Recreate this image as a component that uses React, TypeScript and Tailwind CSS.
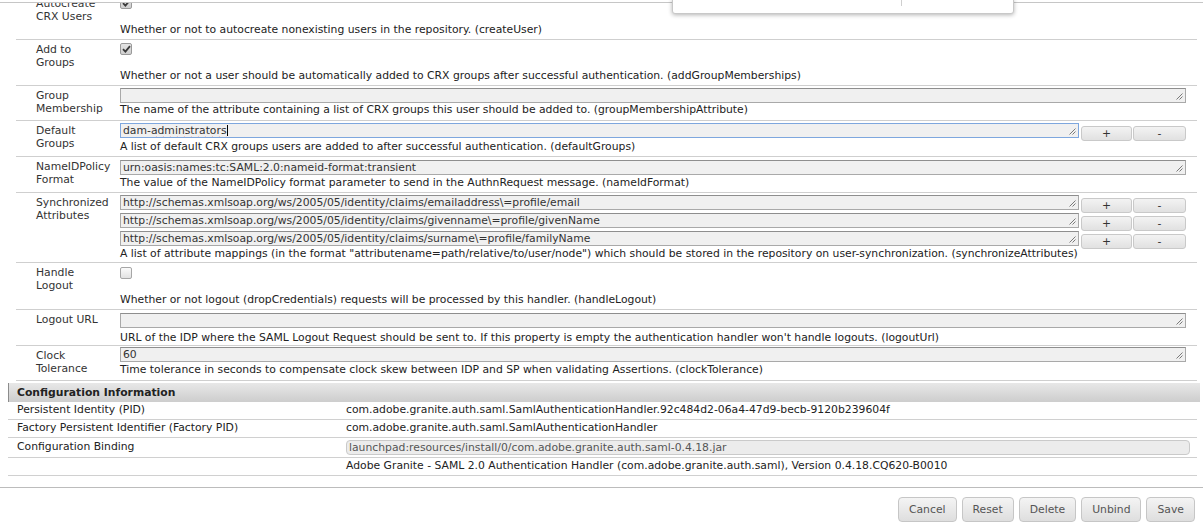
import React from "react";

const FONT = "font-['DejaVu_Sans',Verdana,sans-serif]";

function Grip() {
  return (
    <svg width="7" height="7" className="absolute right-[2px] bottom-[2px]">
      <path d="M6.5 0.5 L0.5 6.5 M6.5 3.5 L3.5 6.5" stroke="#7a7a7a" strokeWidth="1" />
    </svg>
  );
}

function TextBox({ value, focused }: { value?: React.ReactNode; focused?: boolean }) {
  return (
    <div
      className={
        "relative flex-1 h-[15px] border bg-[#f0f0f0] pl-[2px] leading-[13px] text-[#333] whitespace-nowrap overflow-hidden " +
        (focused ? "border-[#7ea7de]" : "border-[#a9a9a9] border-t-[#8e8e8e]")
      }
    >
      {value}
      <Grip />
    </div>
  );
}

function SmallBtn({ label, w }: { label: string; w: string }) {
  return (
    <div
      className={
        "h-[15px] mt-[3px] shrink-0 rounded-[3px] border border-[#c9c9c9] bg-gradient-to-b from-[#f3f3f3] to-[#e1e1e1] text-[#333] text-center leading-[13px] " +
        w
      }
    >
      {label}
    </div>
  );
}

function MultiField({ value, focused, h }: { value: React.ReactNode; focused?: boolean; h: string }) {
  return (
    <div className={"flex items-start " + h}>
      <TextBox value={value} focused={focused} />
      <SmallBtn label="+" w="w-[51px] ml-[2px]" />
      <SmallBtn label="-" w="w-[53px] ml-[1px]" />
    </div>
  );
}

function CheckBox({ checked }: { checked?: boolean }) {
  return (
    <div
      className={
        "w-[12px] h-[12px] rounded-[2px] border flex items-center justify-center " +
        (checked
          ? "border-[#9a9a9a] bg-gradient-to-b from-[#e4e4e4] to-[#cfcfcf]"
          : "border-[#a6a6a6] bg-gradient-to-b from-[#fbfbfb] to-[#e2e2e2]")
      }
    >
      {checked && (
        <svg width="9" height="8" viewBox="0 0 9 8">
          <path d="M1 4.2 L3.4 6.6 L8 1.2" stroke="#3a3a3a" strokeWidth="1.8" fill="none" />
        </svg>
      )}
    </div>
  );
}

function Row({
  label,
  children,
  desc,
  pt = "pt-[2px]",
  pb = "pb-[2px]",
  mt = "",
}: {
  label: React.ReactNode;
  children: React.ReactNode;
  desc: string;
  pt?: string;
  pb?: string;
  mt?: string;
}) {
  return (
    <div className="flex ml-[16px] w-[1181px] border-b border-[#cfcfcf]">
      <div className="w-[104px] shrink-0 pl-[20px] pt-[3px] leading-[13px] text-[#333]">{label}</div>
      <div className={"flex-1 pr-[11px] " + pt + " " + pb}>
        {children}
        <div className={"leading-[14px] text-[#222] whitespace-nowrap " + mt}>{desc}</div>
      </div>
    </div>
  );
}

function ConfigRow({ label, children, h = "h-[17px]" }: { label: string; children: React.ReactNode; h?: string }) {
  return (
    <div className={"flex items-center border-b border-[#d0d0d0] text-[#222] box-content " + h}>
      <div className="w-[338px] shrink-0 pl-[9px]">{label}</div>
      <div className="flex-1 pr-[7px]">{children}</div>
    </div>
  );
}

const attrs = [
  "http://schemas.xmlsoap.org/ws/2005/05/identity/claims/emailaddress\\=profile/email",
  "http://schemas.xmlsoap.org/ws/2005/05/identity/claims/givenname\\=profile/givenName",
  "http://schemas.xmlsoap.org/ws/2005/05/identity/claims/surname\\=profile/familyName",
];

export default function App() {
  return (
    <div className={"relative w-[1203px] h-[522px] overflow-hidden bg-white text-[10.8px] " + FONT}>
      <div className="-mt-[6px]">
        <Row
          label={<>Autocreate<br />CRX Users</>}
          desc="Whether or not to autocreate nonexisting users in the repository. (createUser)"
        >
          <div className="pt-[1px] mb-[14px]">
            <CheckBox checked />
          </div>
        </Row>
        <Row
          label={<>Add to<br />Groups</>}
          desc="Whether or not a user should be automatically added to CRX groups after successful authentication. (addGroupMemberships)"
        >
          <div className="pt-[1px] mb-[14px]">
            <CheckBox checked />
          </div>
        </Row>
        <Row
          label={<>Group<br />Membership</>}
          desc="The name of the attribute containing a list of CRX groups this user should be added to. (groupMembershipAttribute)"
          pb="pb-[3px]"
        >
          <div className="flex">
            <TextBox />
          </div>
        </Row>
        <Row
          label={<>Default<br />Groups</>}
          desc="A list of default CRX groups users are added to after successful authentication. (defaultGroups)"
        >
          <MultiField
            h="h-[17px]"
            focused
            value={
              <span>
                dam-<span className="underline decoration-wavy decoration-[#e02020] decoration-1 underline-offset-[2px]">adminstrators</span>
                <span className="inline-block w-px h-[11px] bg-black align-[-2px]" />
              </span>
            }
          />
        </Row>
        <Row
          label={<>NameIDPolicy<br />Format</>}
          desc="The value of the NameIDPolicy format parameter to send in the AuthnRequest message. (nameIdFormat)"
          pt="pt-[3px]"
          mt="mt-[1px]"
        >
          <div className="flex">
            <TextBox value="urn:oasis:names:tc:SAML:2.0:nameid-format:transient" />
          </div>
        </Row>
        <Row
          label={<>Synchronized<br />Attributes</>}
          desc={'A list of attribute mappings (in the format "attributename=path/relative/to/user/node") which should be stored in the repository on user-synchronization. (synchronizeAttributes)'}
          mt="mt-[1px]"
          pb="pb-[1px]"
        >
          <div className="flex flex-col gap-[3px]">
            {attrs.map((a) => (
              <MultiField key={a} h="h-[15px]" value={a} />
            ))}
          </div>
        </Row>
        <Row
          label={<>Handle<br />Logout</>}
          desc="Whether or not logout (dropCredentials) requests will be processed by this handler. (handleLogout)"
        >
          <div className="pt-[2px] mb-[14px]">
            <CheckBox />
          </div>
        </Row>
        <Row
          label="Logout URL"
          desc="URL of the IDP where the SAML Logout Request should be sent to. If this property is empty the authentication handler won't handle logouts. (logoutUrl)"
          pt="pt-[3px]"
          mt="mt-[3px]"
          pb="pb-0"
        >
          <div className="flex">
            <TextBox />
          </div>
        </Row>
        <Row
          label={<>Clock<br />Tolerance</>}
          desc="Time tolerance in seconds to compensate clock skew between IDP and SP when validating Assertions. (clockTolerance)"
          pt="pt-[1px]"
          mt="mt-[1px]"
          pb="pb-[3px]"
        >
          <div className="flex">
            <TextBox value="60" />
          </div>
        </Row>

        {/* configuration information */}
        <div className="ml-[8px] w-[1192px] mt-[2px]">
          <div className="h-[19px] border-l border-[#8c8c8c] bg-gradient-to-b from-[#e8e8e8] to-[#cdcdcd] pl-[8px] leading-[19px] font-bold text-[#222]">
            Configuration Information
          </div>
          <div className="w-[1189px]">
            <ConfigRow label="Persistent Identity (PID)">
              com.adobe.granite.auth.saml.SamlAuthenticationHandler.92c484d2-06a4-47d9-becb-9120b239604f
            </ConfigRow>
            <ConfigRow label="Factory Persistent Identifier (Factory PID)">
              com.adobe.granite.auth.saml.SamlAuthenticationHandler
            </ConfigRow>
            <ConfigRow label="Configuration Binding" h="h-[19px]">
              <div className="h-[15px] rounded-[4px] border border-[#cacaca] bg-[#ececec] pl-[2px] leading-[13px] text-[#555]">
                launchpad:resources/install/0/com.adobe.granite.auth.saml-0.4.18.jar
              </div>
            </ConfigRow>
            <ConfigRow label="">
              Adobe Granite - SAML 2.0 Authentication Handler (com.adobe.granite.auth.saml), Version 0.4.18.CQ620-B0010
            </ConfigRow>
          </div>
        </div>

        <div className="mt-[11px] border-t border-[#bcbcbc] flex justify-end gap-[5px] pr-[8px] pt-[9px]">
          {["Cancel", "Reset", "Delete", "Unbind", "Save"].map((b) => (
            <div
              key={b}
              className="h-[25px] px-[10px] rounded-[4px] border border-[#c6c6c6] bg-gradient-to-b from-[#f4f4f4] to-[#dedede] text-[#555] leading-[23px] text-[10.8px]"
            >
              {b}
            </div>
          ))}
        </div>
      </div>

      {/* frame edge and menu overlapping the top */}
      <div className="absolute top-0 left-0 right-0 h-[3px] bg-white border-b border-[#c6c6c6]" />
      <div className="absolute left-[672px] -top-px w-[342px] h-[15px] bg-white border border-[#c8c8c8] rounded-b-[3px] shadow-[0_1px_4px_rgba(0,0,0,0.3)]">
        <div className="absolute left-[228px] top-0 h-[6px] w-px bg-[#cfcfcf]" />
      </div>
    </div>
  );
}
